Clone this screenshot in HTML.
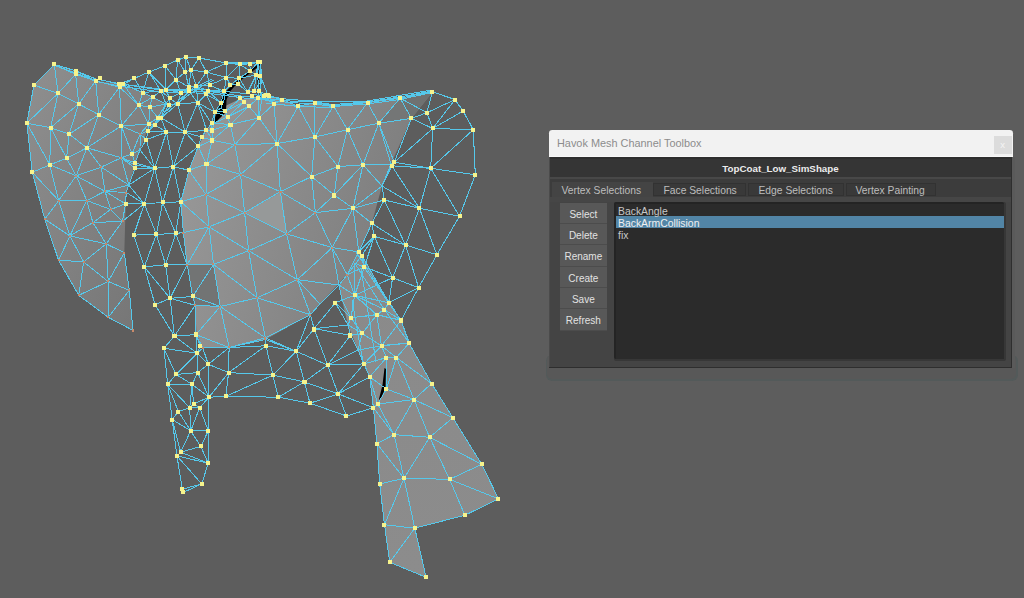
<!DOCTYPE html>
<html><head><meta charset="utf-8"><style>
html,body{margin:0;padding:0;}
body{width:1024px;height:598px;overflow:hidden;background:#5d5d5d;position:relative;font-family:"Liberation Sans",sans-serif;}
</style></head><body>
<svg width="1024" height="598" viewBox="0 0 1024 598" style="position:absolute;left:0;top:0">
<defs><linearGradient id="ga" x1="0" y1="0" x2="1" y2="1"><stop offset="0" stop-color="#8f8f8f"/><stop offset="1" stop-color="#737373"/></linearGradient><linearGradient id="gb" x1="0" y1="0" x2="1" y2="0.3"><stop offset="0" stop-color="#9a9a9a"/><stop offset="1" stop-color="#7c7c7c"/></linearGradient><linearGradient id="gc" x1="0" y1="0" x2="0" y2="1"><stop offset="0" stop-color="#8a8a8a"/><stop offset="1" stop-color="#8c8c8c"/></linearGradient></defs>
<path d="M54.3 64.5 L75.6 72.0 L95.7 80.8 L119.0 84.0 L142.6 92.6 L152.6 97.1 L166.0 104.0 L160.0 118.0 L147.6 130.0 L140.0 150.0 L135.0 165.0 L128.8 185.0 L126.0 192.0 L124.3 252.7 L129.3 290.3 L133.0 330.4 L108.2 317.3 L78.7 295.3 L58.6 260.2 L44.8 219.3 L32.3 172.3 L26.8 123.2 L34.0 85.1Z" fill="url(#ga)"/>
<path d="M214.0 123.0 L221.0 108.0 L240.0 99.0 L262.0 97.0 L269.0 97.0 L282.3 99.6 L298.3 106.4 L314.9 102.6 L333.4 105.7 L367.5 102.6 L400.1 98.1 L432.7 91.7 L411.4 118.6 L391.0 164.0 L382.0 186.0 L371.8 223.3 L358.8 251.9 L346.9 274.8 L320.0 304.0 L310.4 314.6 L265.4 339.5 L229.1 347.5 L202.8 348.0 L196.5 334.5 L195.2 305.3 L187.2 264.7 L183.4 232.6 L180.9 201.8 L189.0 170.3 L198.2 146.5 L206.5 130.2Z" fill="url(#gb)"/>
<path d="M358.8 251.9 L362.2 255.9 L388.8 302.8 L401.1 320.3 L409.0 343.1 L431.6 383.5 L452.9 417.8 L481.7 464.3 L498.5 498.9 L464.9 515.2 L414.8 528.2 L426.1 577.3 L389.7 562.3 L384.5 524.7 L379.7 483.9 L376.9 443.6 L373.4 407.8 L369.7 376.9 L358.0 350.0 L348.0 325.0 L342.0 300.0 L339.0 285.0 L346.9 274.8Z" fill="url(#gc)"/>
<path d="M187.2 264.7 L213.5 264.4 L220.3 306.5 L195.2 305.3Z" fill="#727474"/>
<path d="M400.1 98.1 L432.7 91.7 L411.4 118.6Z" fill="#6f7171"/>
<path d="M400.1 98.1 L411.4 118.6 L378.8 123.2Z" fill="#747676"/>
<path d="M245.2 212.6 L281.1 192.0 L286.9 233.9Z" fill="#969999"/>
<path d="M259.5 63 L261 64.5 L238 82.5 L229.5 92 L226.5 100 L226 112 L214.5 123.5 L212.5 123.5 L218.5 109 L221.5 98 L227.5 90 L237 81 Z" fill="#000"/>
<path d="M256.5 70 L258.5 70 L260 90 L258 90 Z" fill="#111"/>
<path d="M384.5 368 L386 369 L385.5 388 L380 400 L379 399 L382.5 385 Z" fill="#000"/>
<path d="M248.6 250.7L286.6 233.9M148.1 131.0L166.4 132.2M282.3 99.6L298.3 106.4M277.0 143.5L280.3 191.6M394.0 434.6L376.9 443.6M327.6 365.1L338.1 393.9M34.0 85.1L58.1 93.4M138.8 105.2L142.6 92.6M239.8 64.5L249.8 63.8M212.2 140.2L234.8 144.8M481.7 464.3L498.5 498.9M226.5 77.6L230.3 85.1M239.8 64.5L250.3 70.8M298.3 106.4L314.9 102.6M392.6 277.7L354.7 295.3M170.1 298.3L155.1 304.8M149.6 107.2L166.0 104.0M475.3 174.8L459.5 216.3M201.7 483.9L182.4 489.2M388.8 302.8L401.1 320.3M249.8 63.8L257.9 62.5M259.9 75.8L262.0 80.0M243.6 102.1L248.6 106.4M185.2 72.1L175.9 79.6M327.6 365.1L358.0 350.0M230.3 124.7L214.0 123.0M243.6 102.1L227.8 116.9M185.2 72.1L188.9 87.1M338.1 393.9L310.0 403.2M50.6 127.7L69.1 134.2M58.6 200.5L86.7 200.5M224.0 91.4L224.0 100.0M248.6 106.4L259.1 117.7M455.0 99.6L463.3 110.9M248.6 106.4L230.3 124.7M197.2 353.3L202.8 348.0M296.2 351.3L327.6 365.1M173.4 166.6L162.6 202.5M69.1 134.2L86.9 147.8M174.4 336.1L163.9 348.3M119.5 87.1L121.3 126.0M86.7 200.5L105.0 191.3M166.4 132.2L173.4 166.6M92.9 222.6L106.2 243.9M200.8 446.5L208.3 463.3M363.9 363.9L369.7 376.9M267.9 95.1L262.0 80.0M195.9 334.6L200.3 345.8M226.5 77.6L239.1 78.3M54.3 64.5L58.1 93.4M346.4 416.0L373.4 407.8M160.9 117.7L185.2 132.2M384.3 200.0L419.4 208.3M311.6 176.6L315.4 212.6M106.2 243.9L124.3 252.7M225.3 111.4L214.8 112.2M414.0 399.5L452.9 417.8M148.8 124.0L138.8 105.2M333.4 105.7L314.9 137.0M376.8 314.6L381.5 345.9M239.8 97.6L240.0 99.0M362.2 333.4L358.0 350.0M95.7 80.8L78.7 103.9M265.9 345.8L228.6 372.6M212.2 130.2L214.0 123.0M314.9 137.0L277.0 143.5M108.2 281.5L108.2 317.3M170.1 298.3L187.2 264.7M409.0 343.1L396.5 357.6M374.3 236.4L358.8 251.9M296.2 351.3L272.9 375.1M350.5 335.4L327.6 365.1M396.5 357.6L414.0 399.5M237.8 83.8L247.8 92.1M364.3 266.9L392.6 277.7M32.3 172.3L44.8 219.3M371.8 223.3L405.6 245.1M44.8 219.3L69.9 235.9M394.0 434.6L429.6 437.3M76.2 175.8L105.0 191.3M123.3 84.3L138.8 105.2M108.2 317.3L133.0 330.4M138.8 105.2L152.6 97.1M165.9 89.6L169.6 98.1M226.5 77.6L209.7 85.1M481.7 464.3L449.6 479.3M239.8 64.5L239.1 78.3M163.9 348.3L175.9 374.4M259.1 117.7L234.8 144.8M449.6 479.3L464.9 515.2M259.1 117.7L262.0 97.0M207.7 90.9L224.0 91.4M195.9 334.6L195.2 305.3M195.9 334.6L202.8 348.0M206.0 194.5L209.0 226.8M351.0 317.8L335.4 302.8M178.4 411.5L172.2 419.5M162.6 202.5L175.7 233.4M86.9 147.8L121.3 157.8M209.0 226.8L213.5 264.4M363.0 164.8L382.0 186.0M142.6 92.6L160.9 90.9M391.0 164.0L382.0 186.0M374.3 236.4L361.7 255.7M83.7 261.9L78.7 295.3M498.5 498.9L464.9 515.2M119.5 87.1L98.7 114.7M177.7 60.0L175.9 79.6M196.5 85.9L197.7 102.6M156.4 234.4L144.3 266.9M175.9 79.6L188.9 87.1M175.9 374.4L192.2 384.4M351.0 317.8L348.0 325.0M214.8 112.2L221.0 108.0M123.3 84.3L134.5 78.3M354.7 295.3L351.0 317.8M175.7 233.4L165.6 264.7M347.5 129.7L314.9 137.0M163.9 348.3L197.2 353.3M197.7 372.6L209.0 397.2M376.8 314.6L362.2 333.4M226.5 63.0L226.5 77.6M230.3 85.1L237.8 83.8M230.3 85.1L224.0 91.4M333.4 105.7L347.5 129.7M361.7 255.7L364.3 266.9M121.3 157.8L135.0 165.0M315.4 212.6L332.2 247.6M144.3 203.8L156.4 234.4M50.6 127.7L49.8 164.8M455.0 99.6L432.7 128.5M310.0 403.2L346.4 416.0M169.6 98.1L177.7 103.9M396.5 357.6L386.5 389.0M411.4 118.4L378.8 123.2M166.4 132.2L185.2 132.2M430.7 168.3L475.3 174.8M371.8 223.3L374.3 236.4M138.8 105.2L149.6 107.2M76.2 175.8L86.7 200.5M297.3 279.7L320.0 304.0M257.9 98.4L259.1 117.7M376.8 314.6L351.0 317.8M226.5 63.0L260.4 62.0M75.6 74.3L95.7 80.8M449.6 479.3L498.5 498.9M101.2 167.1L105.0 191.3M207.7 90.9L206.5 94.4M265.4 337.9L310.4 314.6M195.9 334.6L220.3 306.5M188.9 170.3L173.4 166.6M126.3 192.5L128.8 185.0M228.6 372.6L229.1 347.5M386.5 389.0L377.7 404.0M254.1 90.9L262.0 80.0M165.1 65.8L177.7 60.0M361.7 255.7L358.8 251.9M230.3 124.7L212.2 130.2M209.0 226.8L248.6 250.7M363.0 164.8L391.0 164.0M173.4 166.6L154.6 168.3M133.8 235.1L156.4 234.4M354.7 295.3L339.0 285.0M259.1 91.4L262.0 97.0M337.9 166.6L334.2 195.0M208.3 430.8L200.8 446.5M409.0 343.1L431.6 383.5M177.7 60.0L185.9 57.0M105.0 191.3L126.3 192.5M239.1 78.3L247.8 92.1M156.4 234.4L175.7 233.4M376.9 443.6L404.0 478.3M175.9 374.4L167.7 384.4M363.0 164.8L353.0 208.3M214.8 112.2L214.0 123.0M76.2 175.8L101.2 167.1M44.8 219.3L58.6 260.2M123.3 84.3L142.6 92.6M188.9 170.3L206.0 194.5M314.9 102.6L333.4 105.7M296.2 351.3L310.4 314.6M274.0 103.9L277.0 143.5M354.7 295.3L376.8 314.6M297.3 279.7L339.0 285.0M78.7 103.9L98.7 114.7M333.4 105.7L367.5 102.6M314.1 328.6L348.0 325.0M69.9 235.9L83.7 261.9M351.0 317.8L362.2 333.4M144.3 203.8L133.8 235.1M230.3 124.7L212.2 140.2M174.4 336.1L195.9 334.6M165.1 65.8L165.9 89.6M209.0 397.2L193.5 403.9M49.8 164.8L58.6 200.5M239.1 78.3L256.1 75.1M264.1 96.4L262.0 97.0M169.6 98.1L168.9 105.2M265.9 345.8L265.4 339.5M361.7 255.7L347.2 274.7M175.9 374.4L197.7 372.6M431.6 383.5L414.0 399.5M76.2 175.8L58.6 200.5M202.8 348.0L229.1 347.5M176.9 455.8L182.4 489.2M347.5 129.7L363.0 164.8M172.2 419.5L180.7 452.1M226.5 63.0L257.9 62.5M121.3 126.0L148.8 124.0M229.1 347.5L265.4 339.5M373.4 407.8L376.9 443.6M404.0 478.3L414.8 528.2M209.7 85.1L207.7 90.9M148.1 131.0L154.6 124.7M148.8 72.1L165.9 89.6M224.0 91.4L221.0 102.6M212.2 130.2L212.2 140.2M208.3 364.3L209.0 397.2M49.8 164.8L76.2 175.8M354.7 295.3L342.0 300.0M429.6 437.3L481.7 464.3M58.1 93.4L78.7 103.9M199.0 58.0L206.5 72.1M239.1 78.3L237.8 83.8M418.6 287.7L388.8 302.8M386.5 357.6L369.7 376.9M353.0 208.3L358.8 251.9M376.9 443.6L379.7 483.9M257.9 62.5L260.4 62.0M201.5 137.2L198.2 146.5M257.9 62.5L259.9 75.8M135.0 162.8L135.0 165.0M354.7 295.3L384.3 309.5M267.9 95.1L269.0 96.4M121.3 126.0L132.0 154.0M226.5 63.0L206.5 72.1M121.3 126.0L138.8 105.2M135.0 162.8L154.6 168.3M180.9 92.6L177.7 103.9M206.5 164.0L240.5 174.5M400.1 98.1L378.8 123.2M212.2 140.2L206.5 164.0M135.0 168.3L121.3 157.8M211.5 123.4L214.0 123.0M257.1 297.8L297.3 279.7M193.5 403.9L199.7 407.7M69.9 235.9L58.6 260.2M209.7 85.1L196.5 85.9M86.9 147.8L66.6 158.3M436.9 254.7L418.6 287.7M426.9 112.7L411.4 118.4M337.9 166.6L311.6 176.6M118.8 83.8L119.5 87.1M384.5 524.7L389.7 562.3M206.5 130.2L201.5 137.2M213.5 264.4L220.3 306.5M58.1 93.4L50.6 127.7M135.0 168.3L154.6 168.3M196.5 85.9L206.5 94.4M269.0 96.4L282.3 99.6M160.9 117.7L166.0 104.0M185.2 132.2L173.4 166.6M144.3 266.9L155.1 304.8M411.4 118.4L432.7 128.5M239.1 78.3L250.3 70.8M265.9 345.8L229.1 347.5M180.7 452.1L208.3 463.3M418.6 287.7L401.1 320.3M362.2 333.4L381.5 345.9M250.3 70.8L256.1 75.1M378.8 123.2L391.0 164.0M274.0 103.9L298.3 106.4M214.8 112.2L227.8 116.9M206.5 94.4L197.7 102.6M176.9 455.8L201.7 483.9M148.8 124.0L140.1 134.0M132.0 154.0L140.0 150.0M226.5 63.0L249.8 63.8M146.3 139.7L148.1 131.0M58.6 260.2L83.7 261.9M227.8 116.9L230.3 124.7M358.8 251.9L347.2 274.7M404.0 478.3L384.5 524.7M381.5 345.9L363.9 363.9M192.2 384.4L209.0 397.2M148.1 131.0L148.8 124.0M185.9 57.0L185.2 72.1M256.1 75.1L262.0 80.0M190.9 70.1L196.5 85.9M188.9 87.1L196.5 85.9M432.4 91.6L426.9 112.7M337.9 166.6L363.0 164.8M192.7 296.5L195.2 305.3M183.4 232.6L187.2 264.7M199.0 58.0L190.9 70.1M92.9 222.6L122.5 221.3M168.9 105.2L166.0 104.0M332.2 247.6L347.2 274.7M185.2 132.2L201.5 137.2M239.1 78.3L230.3 85.1M125.5 203.8L122.5 221.3M34.0 85.1L26.8 123.2M221.0 102.6L221.0 108.0M386.5 357.6L363.9 363.9M208.3 364.3L202.8 348.0M149.6 107.2L152.6 97.1M197.7 102.6L214.8 112.2M298.3 106.4L314.9 137.0M277.0 143.5L240.5 174.5M201.5 137.2L212.2 140.2M144.3 203.8L126.3 192.5M225.3 111.4L240.0 99.0M152.6 97.1L142.6 92.6M419.4 208.3L459.5 216.3M146.3 139.7L140.0 150.0M125.5 203.8L144.3 203.8M377.7 404.0L394.0 434.6M167.7 384.4L192.2 384.4M311.6 176.6L334.2 195.0M391.8 165.8L382.0 186.0M188.9 87.1L188.9 90.9M167.7 384.4L189.7 407.7M86.7 200.5L69.9 235.9M335.4 302.8L314.1 328.6M118.8 83.8L123.3 84.3M129.3 290.3L133.0 330.4M206.5 130.2L185.2 132.2M213.5 264.4L187.2 264.7M125.5 203.8L105.0 191.3M327.6 365.1L304.3 381.9M269.0 96.4L274.0 103.9M165.6 264.7L187.2 264.7M144.3 266.9L170.1 298.3M228.6 372.6L225.8 396.4M157.6 117.7L149.6 107.2M180.7 452.1L176.9 455.8M392.6 277.7L418.6 287.7M327.6 365.1L363.9 363.9M369.7 376.9L373.4 407.8M272.9 375.1L278.4 397.2M335.4 302.8L342.0 300.0M249.8 63.8L250.3 70.8M243.6 102.1L240.0 99.0M152.6 97.1L166.0 104.0M286.6 233.9L297.3 279.7M180.9 201.8L209.0 226.8M206.0 194.5L240.5 174.5M378.8 123.2L394.3 162.3M384.3 309.5L401.1 320.3M381.5 345.9L396.5 357.6M244.6 212.6L248.6 250.7M248.6 106.4L227.8 116.9M338.1 393.9L373.4 407.8M190.9 70.1L188.9 87.1M192.7 296.5L220.3 306.5M259.1 91.4L267.9 95.1M92.9 222.6L69.9 235.9M119.5 87.1L138.8 105.2M180.9 201.8L175.7 233.4M160.9 90.9L169.6 98.1M154.6 168.3L162.6 202.5M177.7 103.9L185.2 132.2M394.0 434.6L404.0 478.3M54.3 64.5L34.0 85.1M160.9 117.7L166.4 132.2M206.5 94.4L214.8 112.2M106.2 243.9L122.5 221.3M197.2 353.3L197.7 372.6M230.3 124.7L234.8 144.8M178.4 411.5L190.7 430.8M280.3 191.6L286.6 233.9M101.2 167.1L128.8 185.0M280.3 191.6L240.5 174.5M108.2 281.5L78.7 295.3M338.1 393.9L369.7 376.9M185.9 57.0L199.0 58.0M211.5 123.4L212.2 130.2M391.8 165.8L391.0 164.0M86.7 200.5L110.7 209.5M154.6 124.7L160.9 117.7M129.3 290.3L108.2 317.3M175.9 79.6L180.9 92.6M463.3 110.9L473.3 129.7M264.1 96.4L267.9 95.1M391.8 165.8L430.7 168.3M144.3 266.9L165.6 264.7M228.6 372.6L209.0 397.2M98.7 114.7L121.3 126.0M239.8 64.5L226.5 77.6M198.2 146.5L173.4 166.6M384.3 200.0L405.6 245.1M369.7 376.9L377.7 404.0M106.2 243.9L108.2 281.5M197.2 353.3L208.3 364.3M185.2 72.1L190.9 70.1M243.6 102.1L225.3 111.4M286.6 233.9L332.2 247.6M419.4 208.3L436.9 254.7M162.6 202.5L156.4 234.4M180.9 201.8L183.4 232.6M86.9 147.8L101.2 167.1M358.8 251.9L332.2 247.6M124.3 252.7L129.3 290.3M381.5 345.9L386.5 357.6M244.6 212.6L209.0 226.8M248.6 250.7L213.5 264.4M452.9 417.8L481.7 464.3M199.7 407.7L208.3 430.8M334.2 195.0L353.0 208.3M384.3 200.0L382.0 186.0M248.6 250.7L297.3 279.7M49.8 164.8L32.3 172.3M220.3 306.5L265.4 337.9M259.1 91.4L264.1 96.4M92.9 222.6L110.7 209.5M200.8 446.5L180.7 452.1M154.6 168.3L144.3 203.8M228.6 372.6L272.9 375.1M160.9 117.7L177.7 103.9M98.7 114.7L86.9 147.8M132.0 154.0L140.1 134.0M197.7 372.6L192.2 384.4M170.1 298.3L174.4 336.1M101.2 167.1L121.3 157.8M414.0 399.5L377.7 404.0M148.8 124.0L157.6 117.7M200.3 345.8L197.2 353.3M280.3 191.6L315.4 212.6M315.4 212.6L286.6 233.9M188.9 170.3L180.9 201.8M405.6 245.1L436.9 254.7M50.6 127.7L66.6 158.3M367.5 102.6L400.1 98.1M58.6 200.5L44.8 219.3M135.0 168.3L128.8 185.0M256.1 75.1L254.1 90.9M367.5 102.6L347.5 129.7M108.2 281.5L129.3 290.3M338.1 393.9L363.9 363.9M314.9 137.0L311.6 176.6M211.5 123.4L206.5 130.2M409.0 343.1L381.5 345.9M174.4 336.1L197.2 353.3M396.5 357.6L431.6 383.5M248.6 250.7L257.1 297.8M225.8 396.4L278.4 397.2M274.0 103.9L262.0 97.0M463.3 110.9L432.7 128.5M391.8 165.8L394.3 162.3M347.2 274.7L339.0 285.0M168.9 105.2L177.7 103.9M54.3 64.5L75.6 74.3M257.9 98.4L248.6 106.4M371.8 223.3L358.8 251.9M188.9 90.9L197.7 102.6M198.2 146.5L188.9 170.3M121.3 126.0L140.1 134.0M78.7 103.9L69.1 134.2M146.3 139.7L140.1 134.0M350.5 335.4L348.0 325.0M388.8 302.8L384.3 309.5M334.2 195.0L315.4 212.6M189.7 407.7L190.7 430.8M432.7 128.5L473.3 129.7M106.2 243.9L83.7 261.9M432.7 128.5L430.7 168.3M206.0 194.5L244.6 212.6M364.3 266.9L347.2 274.7M207.7 90.9L221.0 102.6M386.5 389.0L414.0 399.5M256.1 75.1L259.9 75.8M86.9 147.8L76.2 175.8M414.8 528.2L426.1 577.3M146.3 139.7L166.4 132.2M374.3 236.4L405.6 245.1M209.0 397.2L208.3 430.8M170.1 298.3L195.2 305.3M83.7 261.9L108.2 281.5M259.1 91.4L262.0 80.0M220.3 306.5L257.1 297.8M363.0 164.8L334.2 195.0M220.3 306.5L229.1 347.5M364.3 266.9L354.7 295.3M165.9 89.6L180.9 92.6M105.0 191.3L128.8 185.0M430.7 168.3L459.5 216.3M311.6 176.6L280.3 191.6M132.0 154.0L121.3 157.8M170.1 298.3L192.7 296.5M227.8 116.9L214.0 123.0M304.3 381.9L310.0 403.2M265.4 337.9L265.4 339.5M148.8 124.0L154.6 124.7M142.6 92.6L148.8 72.1M280.3 191.6L244.6 212.6M95.7 80.8L119.5 87.1M338.1 393.9L346.4 416.0M260.4 62.0L259.9 75.8M256.1 75.1L247.8 92.1M135.0 168.3L135.0 165.0M367.5 102.6L378.8 123.2M374.3 236.4L392.6 277.7M455.0 99.6L426.9 112.7M140.1 134.0L140.0 150.0M66.6 158.3L49.8 164.8M208.3 430.8L208.3 463.3M411.4 118.4L394.3 162.3M381.5 345.9L358.0 350.0M166.4 132.2L154.6 168.3M175.9 79.6L165.9 89.6M32.3 172.3L58.6 200.5M296.2 351.3L265.4 337.9M296.2 351.3L265.4 339.5M221.0 102.6L214.8 112.2M314.9 102.6L314.9 137.0M347.5 129.7L337.9 166.6M188.9 90.9L177.7 103.9M121.3 126.0L121.3 157.8M78.7 103.9L50.6 127.7M163.9 348.3L167.7 384.4M350.5 335.4L358.0 350.0M75.6 74.3L78.7 103.9M432.7 128.5L394.3 162.3M259.1 117.7L274.0 103.9M95.7 80.8L98.7 114.7M265.9 345.8L272.9 375.1M350.5 335.4L362.2 333.4M414.8 528.2L389.7 562.3M175.7 233.4L183.4 232.6M209.0 397.2L225.8 396.4M452.9 417.8L429.6 437.3M200.3 345.8L202.8 348.0M177.7 60.0L185.2 72.1M220.3 306.5L195.2 305.3M297.3 279.7L310.4 314.6M431.6 383.5L452.9 417.8M165.9 89.6L160.9 90.9M154.6 124.7L166.4 132.2M430.7 168.3L419.4 208.3M208.3 463.3L201.7 483.9M257.9 62.5L256.1 75.1M135.0 162.8L140.0 150.0M174.4 336.1L195.2 305.3M354.7 295.3L388.8 302.8M206.5 164.0L234.8 144.8M304.3 381.9L278.4 397.2M212.2 140.2L198.2 146.5M265.4 337.9L229.1 347.5M259.1 117.7L230.3 124.7M152.6 97.1L160.9 90.9M193.5 403.9L189.7 407.7M195.9 334.6L229.1 347.5M142.6 92.6L134.5 78.3M265.9 345.8L296.2 351.3M260.4 62.0L262.0 80.0M144.3 203.8L162.6 202.5M209.0 226.8L187.2 264.7M165.1 65.8L175.9 79.6M208.3 364.3L228.6 372.6M374.3 236.4L364.3 266.9M175.7 233.4L187.2 264.7M133.8 235.1L144.3 266.9M384.5 524.7L414.8 528.2M206.5 72.1L209.7 85.1M429.6 437.3L449.6 479.3M247.8 92.1L254.1 90.9M58.1 93.4L26.8 123.2M196.5 85.9L207.7 90.9M118.8 83.8L134.5 78.3M314.1 328.6L350.5 335.4M123.3 84.3L119.5 87.1M156.4 234.4L165.6 264.7M314.1 328.6L327.6 365.1M371.8 223.3L384.3 200.0M351.0 317.8L342.0 300.0M197.7 102.6L206.5 130.2M274.0 103.9L282.3 99.6M176.9 455.8L208.3 463.3M226.5 63.0L239.8 64.5M304.3 381.9L338.1 393.9M75.6 74.3L58.1 93.4M363.9 363.9L358.0 350.0M165.6 264.7L170.1 298.3M373.4 407.8L394.0 434.6M192.2 384.4L189.7 407.7M121.3 157.8L128.8 185.0M239.8 97.6L243.6 102.1M354.7 295.3L347.2 274.7M259.1 117.7L277.0 143.5M206.5 72.1L226.5 77.6M209.0 397.2L199.7 407.7M160.9 90.9L166.0 104.0M206.5 72.1L196.5 85.9M332.2 247.6L297.3 279.7M105.0 191.3L110.7 209.5M353.0 208.3L384.3 200.0M190.7 430.8L180.7 452.1M386.5 357.6L396.5 357.6M110.7 209.5L122.5 221.3M277.0 143.5L234.8 144.8M144.3 203.8L122.5 221.3M257.9 62.5L250.3 70.8M225.3 111.4L221.0 108.0M376.8 314.6L401.1 320.3M144.3 203.8L128.8 185.0M180.9 92.6L169.6 98.1M58.6 260.2L78.7 295.3M26.8 123.2L32.3 172.3M69.9 235.9L106.2 243.9M209.7 85.1L224.0 91.4M188.9 87.1L180.9 92.6M208.3 364.3L197.7 372.6M199.0 58.0L226.5 63.0M429.6 437.3L404.0 478.3M196.5 85.9L188.9 90.9M332.2 247.6L339.0 285.0M264.1 96.4L274.0 103.9M314.1 328.6L296.2 351.3M386.5 357.6L386.5 389.0M197.7 102.6L211.5 123.4M221.0 108.0L224.0 100.0M272.9 375.1L225.8 396.4M335.4 302.8L348.0 325.0M267.9 95.1L282.3 99.6M172.2 419.5L190.7 430.8M400.1 98.1L432.4 91.6M353.0 208.3L332.2 247.6M76.2 70.8L95.7 80.8M26.8 123.2L50.6 127.7M353.0 208.3L382.0 186.0M257.1 297.8L310.4 314.6M190.9 70.1L206.5 72.1M154.6 168.3L128.8 185.0M244.6 212.6L286.6 233.9M192.2 384.4L193.5 403.9M432.4 91.6L455.0 99.6M244.6 212.6L240.5 174.5M320.0 304.0L339.0 285.0M192.7 296.5L187.2 264.7M177.7 103.9L197.7 102.6M213.5 264.4L257.1 297.8M125.5 203.8L110.7 209.5M353.0 208.3L371.8 223.3M190.7 430.8L200.8 446.5M197.7 102.6L185.2 132.2M473.3 129.7L475.3 174.8M214.8 112.2L211.5 123.4M272.9 375.1L304.3 381.9M197.2 353.3L175.9 374.4M132.0 154.0L135.0 162.8M459.5 216.3L436.9 254.7M206.5 164.0L206.0 194.5M172.2 419.5L176.9 455.8M234.8 144.8L240.5 174.5M378.8 123.2L347.5 129.7M400.1 98.1L411.4 118.4M377.7 404.0L373.4 407.8M26.8 123.2L49.8 164.8M148.8 72.1L160.9 90.9M167.7 384.4L172.2 419.5M86.7 200.5L92.9 222.6M154.6 124.7L157.6 117.7M401.1 320.3L381.5 345.9M206.5 130.2L212.2 130.2M394.3 162.3L391.0 164.0M185.2 132.2L198.2 146.5M278.4 397.2L310.0 403.2M257.9 98.4L262.0 97.0M157.6 117.7L160.9 117.7M264.1 96.4L269.0 96.4M78.7 295.3L108.2 317.3M221.0 102.6L224.0 100.0M394.3 162.3L430.7 168.3M379.7 483.9L404.0 478.3M414.0 399.5L429.6 437.3M180.9 92.6L188.9 90.9M419.4 208.3L405.6 245.1M314.1 328.6L310.4 314.6M378.8 123.2L363.0 164.8M384.3 309.5L376.8 314.6M405.6 245.1L418.6 287.7M76.2 70.8L75.6 74.3M124.3 252.7L108.2 281.5M404.0 478.3L449.6 479.3M277.0 143.5L311.6 176.6M154.6 168.3L135.0 165.0M206.5 164.0L188.9 170.3M199.7 407.7L190.7 430.8M426.9 112.7L432.7 128.5M192.7 296.5L213.5 264.4M183.4 232.6L209.0 226.8M259.1 91.4L257.9 98.4M206.5 130.2L212.2 140.2M419.4 208.3L382.0 186.0M190.7 430.8L208.3 430.8M160.9 117.7L168.9 105.2M389.7 562.3L426.1 577.3M391.8 165.8L419.4 208.3M98.7 114.7L69.1 134.2M342.0 300.0L339.0 285.0M226.5 77.6L224.0 91.4M392.6 277.7L388.8 302.8M310.4 314.6L320.0 304.0M201.7 483.9L183.3 492.4M473.3 129.7L430.7 168.3M206.5 94.4L221.0 102.6M379.7 483.9L384.5 524.7M121.3 126.0L86.9 147.8M155.1 304.8L174.4 336.1M178.4 411.5L189.7 407.7M400.1 98.1L426.9 112.7M257.1 297.8L265.4 337.9M185.9 57.0L190.9 70.1M169.6 98.1L166.0 104.0M167.7 384.4L178.4 411.5M173.4 166.6L180.9 201.8M182.4 489.2L183.3 492.4M69.1 134.2L66.6 158.3M401.1 320.3L409.0 343.1M195.9 334.6L197.2 353.3M54.3 64.5L76.2 70.8M135.0 162.8L121.3 157.8M125.5 203.8L126.3 192.5M157.6 117.7L166.0 104.0M198.2 146.5L206.5 164.0M208.3 364.3L229.1 347.5M298.3 106.4L277.0 143.5M369.7 376.9L386.5 389.0M189.7 407.7L199.7 407.7M134.5 78.3L148.8 72.1M225.3 111.4L227.8 116.9M414.0 399.5L394.0 434.6M148.8 124.0L149.6 107.2M162.6 202.5L180.9 201.8M180.9 201.8L206.0 194.5M148.1 131.0L140.1 134.0M362.2 333.4L348.0 325.0M353.0 208.3L315.4 212.6M405.6 245.1L392.6 277.7M148.8 72.1L165.1 65.8M58.6 200.5L69.9 235.9M254.1 90.9L259.1 91.4M146.3 139.7L154.6 168.3M314.9 137.0L337.9 166.6M154.6 168.3L140.0 150.0M66.6 158.3L76.2 175.8M296.2 351.3L304.3 381.9M54.3 64.5L76.0 71.0L96.0 79.0L123.0 84.3L160.0 90.0L210.0 91.5L244.0 96.4L290.0 101.0L315.0 102.0L333.0 104.5L367.0 102.0L400.0 97.0L432.0 91.0M54.3 65.5L76.0 73.0L96.0 81.5L119.0 86.0L160.0 91.8L210.0 93.5L244.0 98.0L290.0 102.5L315.0 104.0L333.0 106.5L367.0 104.0L400.0 99.5L432.0 92.5M110.0 82.5L160.0 89.0L210.0 90.0L250.0 94.0L290.0 99.5L320.0 101.5L367.0 101.0L432.0 90.0M266.0 103.0L298.0 106.5L333.0 107.5M148.0 131.0L165.0 112.0L185.0 95.0L200.0 85.0L212.0 79.0M150.0 130.0L167.0 113.0L187.0 96.0L202.0 86.0L214.0 80.0M257.0 69.0L259.0 90.0M260.0 68.0L261.0 92.0M358.8 250.0L388.8 303.0M356.0 252.0L401.1 320.4M354.8 263.2L354.6 295.6M354.8 263.2L364.0 267.0M362.5 255.5L364.0 267.0M364.0 267.0L392.8 277.7M354.8 263.2L384.2 309.5M354.6 295.6L376.8 314.9M354.6 295.6L350.9 317.7M350.9 317.7L376.8 314.9M376.8 314.9L384.2 309.5M384.2 309.5L388.8 303.0M388.8 303.0L401.1 320.4M401.1 320.4L409.4 342.9M376.8 314.9L362.1 333.7M362.1 333.7L350.9 317.7M362.1 333.7L381.4 345.6M381.4 345.6L409.4 342.9M381.4 345.6L386.4 357.2M376.8 314.9L401.1 320.4M384.2 309.5L409.4 342.9M362.1 333.7L350.2 335.2M352.0 300.0L363.0 362.0M361.0 268.0L376.0 362.0M354.6 295.6L384.2 309.5M364.0 267.0L388.8 303.0M358.8 251.9L362.2 255.9L388.8 302.8L401.1 320.3L409.0 343.1L431.6 383.5L452.9 417.8L481.7 464.3L498.5 498.9L464.9 515.2L414.8 528.2L426.1 577.3L389.7 562.3L384.5 524.7L379.7 483.9L376.9 443.6L373.4 407.8L369.7 376.9L358.0 350.0M129.3 290.3L133.0 330.4L108.2 317.3L78.7 295.3L58.6 260.2L44.8 219.3L32.3 172.3L26.8 123.2L34.0 85.1L54.3 64.5M432.7 91.7L454.9 99.8L463.1 111.1L473.2 129.7L475.3 174.8L459.5 216.3L436.9 254.7L418.6 287.7L401.1 320.3" stroke="#55c8eb" stroke-width="1" fill="none" shape-rendering="crispEdges"/>
<path d="M75 175h2v2h-2zM100 166h2v2h-2zM120 157h2v2h-2zM139 133h2v2h-2zM279 191h2v2h-2zM58 200h2v2h-2zM86 200h2v2h-2zM104 190h2v2h-2zM44 218h2v2h-2zM92 222h2v2h-2zM110 208h2v2h-2zM69 235h2v2h-2zM105 243h2v2h-2zM123 252h2v2h-2zM58 259h2v2h-2zM83 261h2v2h-2zM107 280h2v2h-2zM128 289h2v2h-2zM78 294h2v2h-2zM107 316h2v2h-2zM132 329h2v2h-2zM122 220h2v2h-2zM125 192h2v2h-2zM205 194h2v2h-2zM244 212h2v2h-2zM182 232h2v2h-2zM208 226h2v2h-2zM248 250h2v2h-2zM212 263h2v2h-2zM186 264h2v2h-2zM219 306h2v2h-2zM194 304h2v2h-2zM256 297h2v2h-2zM264 337h2v2h-2zM280 191h2v2h-2zM314 212h2v2h-2zM286 233h2v2h-2zM331 247h2v2h-2zM296 279h2v2h-2zM346 274h2v2h-2zM309 314h2v2h-2zM132 330h2v2h-2zM202 347h2v2h-2zM228 346h2v2h-2zM264 338h2v2h-2zM234 144h2v2h-2zM240 174h2v2h-2zM280 191h2v2h-2zM314 212h2v2h-2zM244 212h2v2h-2zM286 233h2v2h-2z" fill="#c98a6a"/>
<path d="M52 62h4v4h-4zM74 69h4v4h-4zM74 72h4v4h-4zM94 79h4v4h-4zM98 76h4v4h-4zM117 82h4v4h-4zM121 82h4v4h-4zM118 85h4v4h-4zM32 83h4v4h-4zM56 91h4v4h-4zM77 102h4v4h-4zM97 113h4v4h-4zM119 124h4v4h-4zM25 121h4v4h-4zM49 126h4v4h-4zM67 132h4v4h-4zM85 146h4v4h-4zM65 156h4v4h-4zM48 163h4v4h-4zM30 170h4v4h-4zM130 152h4v4h-4zM133 161h4v4h-4zM133 166h4v4h-4zM144 138h4v4h-4zM146 129h4v4h-4zM147 122h4v4h-4zM153 123h4v4h-4zM156 116h4v4h-4zM159 116h4v4h-4zM137 103h4v4h-4zM148 105h4v4h-4zM151 95h4v4h-4zM141 91h4v4h-4zM132 76h4v4h-4zM147 70h4v4h-4zM163 64h4v4h-4zM176 58h4v4h-4zM184 55h4v4h-4zM197 56h4v4h-4zM224 61h4v4h-4zM238 62h4v4h-4zM248 62h4v4h-4zM256 60h4v4h-4zM258 60h4v4h-4zM183 70h4v4h-4zM189 68h4v4h-4zM204 70h4v4h-4zM174 78h4v4h-4zM224 76h4v4h-4zM237 76h4v4h-4zM248 69h4v4h-4zM254 73h4v4h-4zM258 74h4v4h-4zM208 83h4v4h-4zM228 83h4v4h-4zM236 82h4v4h-4zM187 85h4v4h-4zM194 84h4v4h-4zM164 88h4v4h-4zM159 89h4v4h-4zM179 91h4v4h-4zM187 89h4v4h-4zM206 89h4v4h-4zM204 92h4v4h-4zM222 89h4v4h-4zM246 90h4v4h-4zM252 89h4v4h-4zM257 89h4v4h-4zM250 94h4v4h-4zM256 96h4v4h-4zM262 94h4v4h-4zM266 93h4v4h-4zM238 96h4v4h-4zM242 100h4v4h-4zM247 104h4v4h-4zM257 116h4v4h-4zM168 96h4v4h-4zM167 103h4v4h-4zM176 102h4v4h-4zM196 101h4v4h-4zM219 101h4v4h-4zM223 109h4v4h-4zM213 110h4v4h-4zM226 115h4v4h-4zM228 123h4v4h-4zM210 121h4v4h-4zM204 128h4v4h-4zM210 128h4v4h-4zM164 130h4v4h-4zM183 130h4v4h-4zM200 135h4v4h-4zM210 138h4v4h-4zM196 144h4v4h-4zM204 162h4v4h-4zM187 168h4v4h-4zM171 165h4v4h-4zM153 166h4v4h-4zM264 93h4v4h-4zM267 94h4v4h-4zM272 102h4v4h-4zM280 98h4v4h-4zM296 104h4v4h-4zM313 101h4v4h-4zM331 104h4v4h-4zM366 101h4v4h-4zM398 96h4v4h-4zM430 90h4v4h-4zM453 98h4v4h-4zM461 109h4v4h-4zM425 111h4v4h-4zM409 116h4v4h-4zM431 126h4v4h-4zM471 128h4v4h-4zM377 121h4v4h-4zM346 128h4v4h-4zM313 135h4v4h-4zM275 142h4v4h-4zM336 165h4v4h-4zM361 163h4v4h-4zM390 164h4v4h-4zM392 160h4v4h-4zM429 166h4v4h-4zM473 173h4v4h-4zM310 175h4v4h-4zM124 202h4v4h-4zM142 202h4v4h-4zM161 200h4v4h-4zM179 200h4v4h-4zM132 233h4v4h-4zM154 232h4v4h-4zM174 231h4v4h-4zM142 265h4v4h-4zM164 263h4v4h-4zM168 296h4v4h-4zM153 303h4v4h-4zM191 294h4v4h-4zM172 334h4v4h-4zM194 333h4v4h-4zM332 193h4v4h-4zM351 206h4v4h-4zM370 221h4v4h-4zM382 198h4v4h-4zM417 206h4v4h-4zM458 214h4v4h-4zM372 234h4v4h-4zM404 243h4v4h-4zM435 253h4v4h-4zM360 254h4v4h-4zM362 265h4v4h-4zM391 276h4v4h-4zM417 286h4v4h-4zM353 293h4v4h-4zM387 301h4v4h-4zM382 308h4v4h-4zM375 313h4v4h-4zM349 316h4v4h-4zM399 318h4v4h-4zM333 301h4v4h-4zM312 327h4v4h-4zM348 333h4v4h-4zM360 331h4v4h-4zM357 250h4v4h-4zM173 334h4v4h-4zM194 332h4v4h-4zM162 346h4v4h-4zM198 344h4v4h-4zM195 351h4v4h-4zM206 362h4v4h-4zM264 344h4v4h-4zM294 349h4v4h-4zM312 328h4v4h-4zM348 334h4v4h-4zM326 363h4v4h-4zM174 372h4v4h-4zM196 371h4v4h-4zM227 371h4v4h-4zM271 373h4v4h-4zM302 380h4v4h-4zM336 392h4v4h-4zM166 382h4v4h-4zM190 382h4v4h-4zM207 395h4v4h-4zM224 394h4v4h-4zM276 395h4v4h-4zM308 401h4v4h-4zM344 414h4v4h-4zM176 410h4v4h-4zM170 418h4v4h-4zM192 402h4v4h-4zM188 406h4v4h-4zM198 406h4v4h-4zM189 429h4v4h-4zM206 429h4v4h-4zM199 444h4v4h-4zM179 450h4v4h-4zM175 454h4v4h-4zM206 461h4v4h-4zM200 482h4v4h-4zM180 487h4v4h-4zM181 490h4v4h-4zM333 301h4v4h-4zM387 301h4v4h-4zM399 319h4v4h-4zM312 327h4v4h-4zM348 334h4v4h-4zM407 341h4v4h-4zM380 344h4v4h-4zM384 356h4v4h-4zM394 356h4v4h-4zM326 363h4v4h-4zM362 362h4v4h-4zM368 375h4v4h-4zM430 382h4v4h-4zM384 387h4v4h-4zM303 380h4v4h-4zM336 392h4v4h-4zM412 398h4v4h-4zM376 402h4v4h-4zM371 406h4v4h-4zM451 416h4v4h-4zM392 433h4v4h-4zM428 435h4v4h-4zM375 442h4v4h-4zM480 462h4v4h-4zM378 482h4v4h-4zM402 476h4v4h-4zM448 477h4v4h-4zM496 497h4v4h-4zM463 513h4v4h-4zM382 523h4v4h-4zM413 526h4v4h-4zM388 560h4v4h-4zM424 575h4v4h-4zM213 110h4v4h-4zM223 109h4v4h-4zM226 115h4v4h-4zM229 123h4v4h-4zM210 121h4v4h-4zM204 128h4v4h-4zM210 129h4v4h-4zM200 135h4v4h-4zM210 139h4v4h-4zM196 144h4v4h-4zM205 162h4v4h-4zM257 116h4v4h-4zM275 142h4v4h-4zM313 135h4v4h-4zM310 175h4v4h-4zM310 175h4v4h-4zM336 165h4v4h-4zM332 194h4v4h-4zM351 206h4v4h-4z" fill="#f6f38c"/>
</svg>
<div id="dlg" style="position:absolute;left:0;top:0;width:1024px;height:598px;">
  <div style="position:absolute;left:545.5px;top:355px;width:472px;height:26px;border-radius:6px;background:#535a5a;"></div>
  <div style="position:absolute;left:547px;top:355px;width:469px;height:24px;border-radius:5px;background:#585858;"></div>
  <div style="position:absolute;left:1012px;top:157px;width:3px;height:211px;background:#5a5a5a;"></div>
  <div style="position:absolute;left:549px;top:157px;width:463px;height:211px;background:#2e2e2e;"></div>
  <div style="position:absolute;left:549px;top:157px;width:1px;height:210px;background:#4b4b4b;"></div>
  <div style="position:absolute;left:549px;top:130px;width:464px;height:27px;background:#f2f2f2;border-radius:3.3px 3.3px 0 0;"></div>
  <div style="position:absolute;left:549px;top:156px;width:464px;height:1px;background:#f8f8f8;"></div>
  <div style="position:absolute;left:557px;top:136px;font-size:10.9px;color:#8c8c8c;line-height:14px;white-space:nowrap;">Havok Mesh Channel Toolbox</div>
  <div style="position:absolute;left:994px;top:136px;width:18px;height:17.7px;background:#dcdcdc;"></div>
  <div style="position:absolute;left:1000.3px;top:137.5px;font-size:9.5px;color:#f4f4f4;line-height:14px;">x</div>
  <div style="position:absolute;left:550px;top:159px;width:461px;height:17.7px;background:#353535;"></div>
  <div style="position:absolute;left:550px;top:163px;width:461px;text-align:center;font-size:9.75px;font-weight:bold;color:#ececec;line-height:12px;white-space:nowrap;">TopCoat_Low_SimShape</div>
  <div style="position:absolute;left:550px;top:177px;width:461px;height:1.7px;background:#484848;"></div>
  <div style="position:absolute;left:550px;top:178.7px;width:461px;height:18px;background:#3c3c3c;"></div>
  <div style="position:absolute;left:552px;top:181.6px;width:100.5px;height:15px;background:#444;"></div>
  <div style="position:absolute;left:653px;top:182.9px;width:93.3px;height:13.5px;background:#393939;box-shadow:inset 0 0 0 1px #323232;"></div>
  <div style="position:absolute;left:748.4px;top:182.9px;width:95.3px;height:13.5px;background:#393939;box-shadow:inset 0 0 0 1px #323232;"></div>
  <div style="position:absolute;left:845.6px;top:182.9px;width:90.6px;height:13.5px;background:#393939;box-shadow:inset 0 0 0 1px #323232;"></div>
  <div style="position:absolute;left:561.5px;top:185px;font-size:10.3px;color:#bdbdbd;line-height:12px;white-space:nowrap;">Vertex Selections</div>
  <div style="position:absolute;left:663.5px;top:185px;font-size:10.3px;color:#bdbdbd;line-height:12px;white-space:nowrap;">Face Selections</div>
  <div style="position:absolute;left:758.5px;top:185px;font-size:10.3px;color:#bdbdbd;line-height:12px;white-space:nowrap;">Edge Selections</div>
  <div style="position:absolute;left:855.5px;top:185px;font-size:10.3px;color:#bdbdbd;line-height:12px;white-space:nowrap;">Vertex Painting</div>
  <div style="position:absolute;left:550px;top:196.6px;width:461px;height:170.4px;background:#444;"></div>
  <div style="position:absolute;left:550px;top:196.6px;width:461px;height:5px;background:#464646;"></div>
  <div style="position:absolute;left:560.2px;top:202.8px;width:46.8px;height:127.8px;background:#4c4c4c;"></div>
  <div style="position:absolute;left:560.2px;top:202.8px;width:46.8px;height:20.3px;background:#585858;"></div>
  <div style="position:absolute;left:560.2px;top:224.1px;width:46.8px;height:20.3px;background:#585858;"></div>
  <div style="position:absolute;left:560.2px;top:245.4px;width:46.8px;height:20.3px;background:#585858;"></div>
  <div style="position:absolute;left:560.2px;top:266.7px;width:46.8px;height:20.3px;background:#585858;"></div>
  <div style="position:absolute;left:560.2px;top:288px;width:46.8px;height:20.3px;background:#585858;"></div>
  <div style="position:absolute;left:560.2px;top:309.3px;width:46.8px;height:20.3px;background:#585858;"></div>
  <div style="position:absolute;left:560px;top:208.5px;width:46.7px;text-align:center;font-size:10px;color:#e2e2e2;line-height:12px;">Select</div>
  <div style="position:absolute;left:560px;top:229.8px;width:46.7px;text-align:center;font-size:10px;color:#e2e2e2;line-height:12px;">Delete</div>
  <div style="position:absolute;left:560px;top:251.3px;width:46.7px;text-align:center;font-size:10px;color:#e2e2e2;line-height:12px;">Rename</div>
  <div style="position:absolute;left:560px;top:272.6px;width:46.7px;text-align:center;font-size:10px;color:#e2e2e2;line-height:12px;">Create</div>
  <div style="position:absolute;left:560px;top:294px;width:46.7px;text-align:center;font-size:10px;color:#e2e2e2;line-height:12px;">Save</div>
  <div style="position:absolute;left:560px;top:315.4px;width:46.7px;text-align:center;font-size:10px;color:#e2e2e2;line-height:12px;">Refresh</div>
  <div style="position:absolute;left:614.2px;top:202.3px;width:391.6px;height:158.7px;background:#373737;border-radius:2px;"></div>
  <div style="position:absolute;left:614.2px;top:202.3px;width:389.6px;height:156.5px;background:#242424;border-radius:2px;"></div>
  <div style="position:absolute;left:615.8px;top:203.6px;width:388px;height:155px;background:#2b2b2b;"></div>
  <div style="position:absolute;left:615.9px;top:215.8px;width:387.9px;height:12.1px;background:#5285a6;"></div>
  <div style="position:absolute;left:618px;top:206px;font-size:10.4px;color:#c8c8c8;line-height:12px;white-space:nowrap;">BackAngle</div>
  <div style="position:absolute;left:618px;top:218px;font-size:10.4px;color:#f0f0f0;line-height:12px;white-space:nowrap;">BackArmCollision</div>
  <div style="position:absolute;left:618px;top:230.4px;font-size:10.4px;color:#c8c8c8;line-height:12px;white-space:nowrap;">fix</div>
</div>

</body></html>
